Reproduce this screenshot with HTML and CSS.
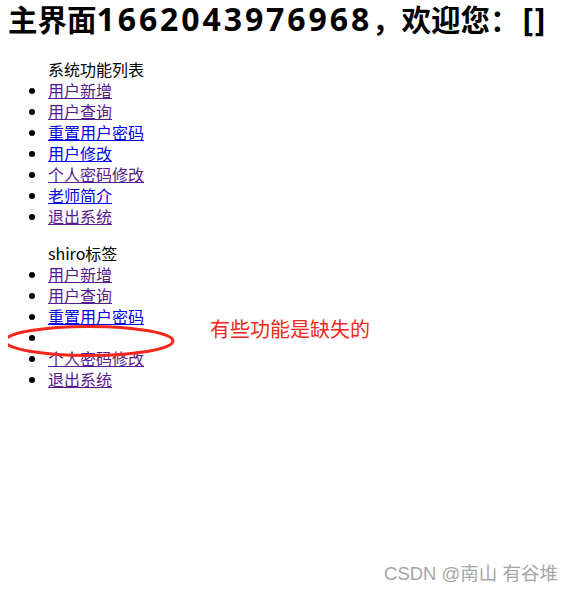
FILE: index.html
```html
<!DOCTYPE html>
<html lang="zh">
<head>
<meta charset="utf-8">
<link rel="stylesheet" href="styles.css">
</head>
<body>
<h1 class="title">主界面<span class="num">1662043976968</span>，欢迎您：<span class="br">[]</span></h1>
<ul class="menu">
  <li class="label">系统功能列表</li>
  <li><a class="visited" href="#">用户新增</a></li>
  <li><a class="visited" href="#">用户查询</a></li>
  <li><a class="link" href="#">重置用户密码</a></li>
  <li><a class="link" href="#">用户修改</a></li>
  <li><a class="visited" href="#">个人密码修改</a></li>
  <li><a class="link" href="#">老师简介</a></li>
  <li><a class="visited" href="#">退出系统</a></li>
</ul>
<ul class="menu">
  <li class="label">shiro标签</li>
  <li><a class="visited" href="#">用户新增</a></li>
  <li><a class="visited" href="#">用户查询</a></li>
  <li><a class="link" href="#">重置用户密码</a></li>
  <li></li>
  <li><a class="visited" href="#">个人密码修改</a></li>
  <li><a class="visited" href="#">退出系统</a></li>
</ul>
<svg class="ring" width="180" height="40" viewBox="0 0 180 40">
  <ellipse cx="89" cy="20" rx="84" ry="14.5" fill="none" stroke="#f5261b" stroke-width="3"/>
</svg>
<div class="note">有些功能是缺失的</div>
<div class="mark">CSDN @南山 有谷堆</div>
</body>
</html>
```
FILE: styles.css
```css
html, body {
  margin: 0;
  padding: 0;
  background: #fff;
}
body {
  margin: 0 8px;
  font-family: "Noto Sans CJK SC", "Noto Sans", sans-serif;
  font-size: 16px;
  line-height: 21px;
  color: #000;
  position: relative;
  height: 594px;
}
.title {
  margin: 0;
  font-size: 29.5px;
  line-height: 36px;
  font-weight: bold;
  white-space: nowrap;
}
.title .num {
  font-family: "Open Sans", "Noto Sans CJK SC", sans-serif;
  font-size: 32px;
  letter-spacing: 2.9px;
}
.title .br {
  font-family: "Open Sans", "Noto Sans CJK SC", sans-serif;
  font-size: 32px;
  letter-spacing: 1.5px;
  margin-left: 3px;
}
.menu {
  margin: 22px 0 16px;
  padding-left: 40px;
}
.menu + .menu {
  margin-top: 16px;
}
.menu li {
  height: 21px;
}
.menu .label {
  list-style: none;
}
.menu a {
  text-decoration: underline;
}
.menu a.link {
  color: #0000ee;
}
.menu a.visited {
  color: #551a8b;
}
.ring {
  position: absolute;
  left: -8px;
  top: 321px;
}
.note {
  position: absolute;
  left: 202px;
  top: 316px;
  font-size: 20px;
  line-height: 26px;
  color: #f5261b;
}
.mark {
  position: absolute;
  right: 8px;
  top: 561px;
  font-size: 18.5px;
  line-height: 26px;
  color: #a6a6a6;
  font-family: "Liberation Sans", "Noto Sans CJK SC", sans-serif;
}
```
